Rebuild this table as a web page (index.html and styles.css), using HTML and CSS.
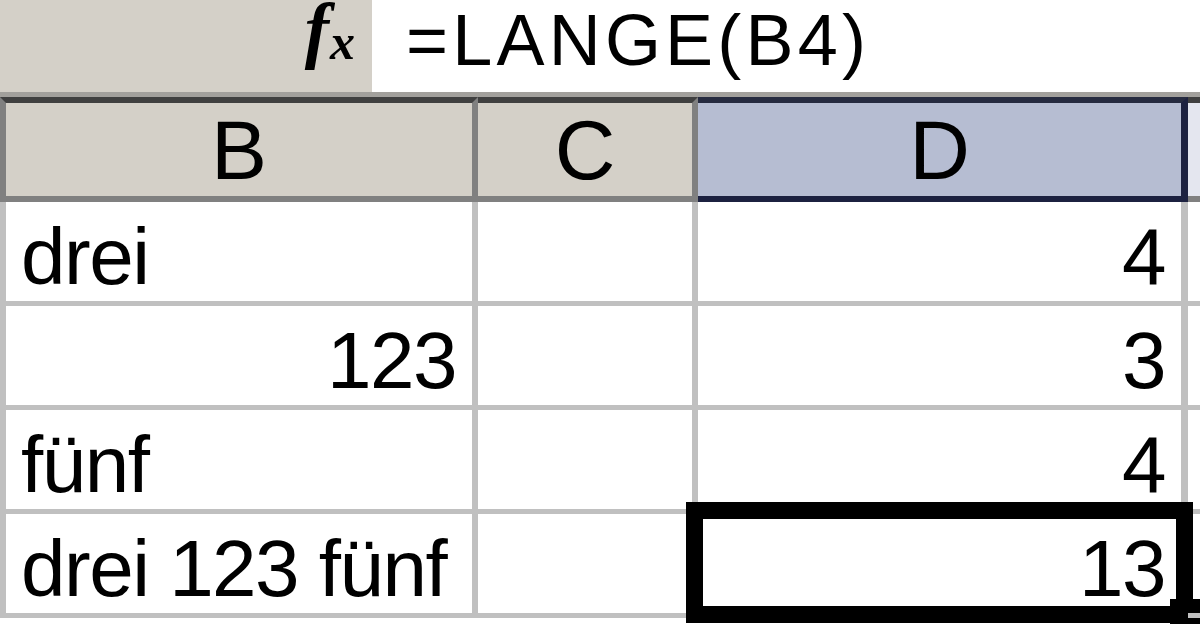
FILE: index.html
```html
<!DOCTYPE html>
<html lang="de">
<head>
<meta charset="utf-8">
<title>LANGE</title>
<link rel="stylesheet" href="styles.css">
</head>
<body>
<div class="fbar">
  <div class="fx-area"><span class="fx"><span class="fx-f">f</span><span class="fx-x">x</span></span></div>
  <div class="formula">=LANGE(B4)</div>
</div>
<div class="sheet">
  <div class="hd first">B</div>
  <div class="hd">C</div>
  <div class="hd sel">D</div>
  <div class="hd next"></div>

  <div class="cell first">drei</div>
  <div class="cell"></div>
  <div class="cell dcol num">4</div>
  <div class="cell last"></div>

  <div class="cell first num">123</div>
  <div class="cell"></div>
  <div class="cell dcol num">3</div>
  <div class="cell last"></div>

  <div class="cell first">fünf</div>
  <div class="cell"></div>
  <div class="cell dcol num">4</div>
  <div class="cell last"></div>

  <div class="cell first">drei 123 fünf</div>
  <div class="cell"></div>
  <div class="cell dcol num active">13<span class="selbox"></span><span class="handle"></span></div>
  <div class="cell last"></div>
</div>
</body>
</html>
```
FILE: styles.css
```css
html, body {
  margin: 0;
  padding: 0;
  background: #ffffff;
}
body {
  width: 1200px;
  height: 624px;
  overflow: hidden;
  font-family: "Liberation Sans", Arial, sans-serif;
  color: #000;
}
.fbar {
  display: flex;
  height: 92px;
  border-bottom: 5px solid #a2a09c;
}
.fx-area {
  width: 372px;
  background: #d4d0c8;
  display: flex;
  justify-content: flex-end;
  align-items: flex-start;
  padding-right: 17px;
  box-sizing: border-box;
}
.fx {
  font-family: "Liberation Serif", "Times New Roman", serif;
  font-style: italic;
  font-weight: bold;
  line-height: 60px;
  white-space: nowrap;
}
.fx-f {
  font-size: 73px;
}
.fx-x {
  font-size: 50px;
  position: relative;
  top: 5px;
  margin-left: 1px;
}
.formula {
  flex: 1;
  background: #fff;
  font-size: 72px;
  line-height: 80px;
  letter-spacing: 4.2px;
  padding-left: 34px;
}
.sheet {
  display: grid;
  grid-template-columns: 478px 220px 490px 1fr;
  grid-template-rows: 105px 104px 104px 104px 104px;
}
.hd {
  box-sizing: border-box;
  background: #d4d0c8;
  border-top: 6px solid #404040;
  border-right: 6px solid #808080;
  border-bottom: 6px solid #808080;
  font-size: 84px;
  line-height: 95px;
  text-align: center;
}
.hd.first {
  border-left: 6px solid #808080;
}
.hd.sel {
  background: #b6bdd2;
  border-top-color: #262b40;
  border-bottom-color: #1c2140;
  border-right: 7px solid #1c2140;
}
.hd.next {
  background: #e4e6ef;
  border-right: 0;
}
.cell {
  position: relative;
  box-sizing: border-box;
  border-right: 6px solid #c0c0c0;
  border-bottom: 5px solid #c0c0c0;
  font-size: 80px;
  letter-spacing: -1.5px;
  line-height: 95px;
  padding: 7px 16px 0 15px;
  white-space: nowrap;
}
.cell.first {
  border-left: 6px solid #c0c0c0;
}
.cell.dcol {
  border-right-width: 7px;
}
.cell.last {
  border-right: 0;
}
.num {
  text-align: right;
}
.selbox {
  position: absolute;
  left: -12px;
  top: -12px;
  width: 507px;
  height: 121px;
  box-sizing: border-box;
  border: 17px solid #000;
}
.handle {
  position: absolute;
  left: 472px;
  top: 85px;
  width: 30px;
  height: 30px;
  background: #000;
}
```
